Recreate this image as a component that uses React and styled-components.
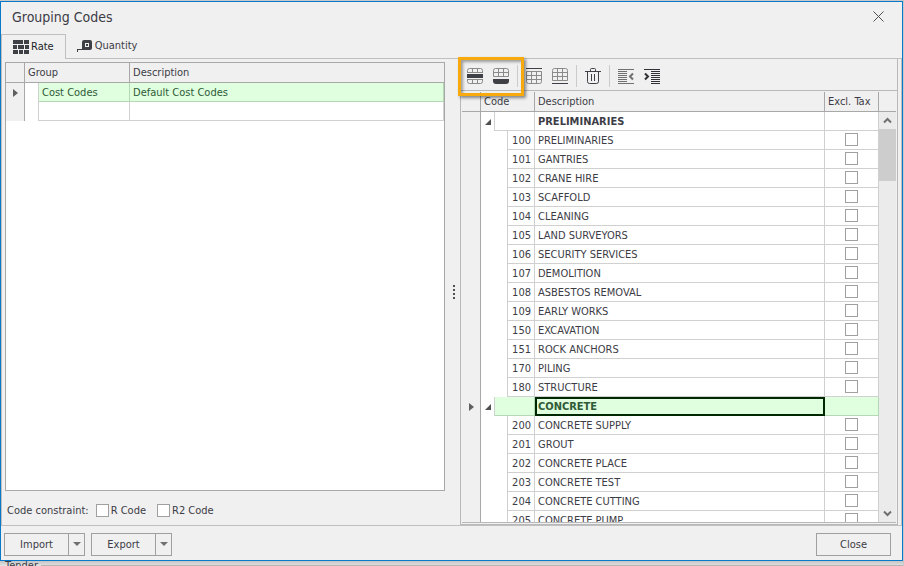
import React, { useState } from "react";
import styled, { createGlobalStyle, css } from "styled-components";

const Global = createGlobalStyle`
  *, *::before, *::after { box-sizing: border-box; }
  body { margin: 0; background: #c9c9c9; overflow: hidden; }
  body, button, input, table { font-family: "DejaVu Sans Condensed", "Noto Sans", sans-serif; font-size: 11px; color: #3c3c46; }
  button { margin: 0; padding: 0; border: 0; background: none; }
`;

const Desktop = styled.div`
  height: 100vh;
  display: flex;
  flex-direction: column;
  padding: 1px 1px 0 0;
`;
const Dialog = styled.section`
  flex: 1;
  min-height: 0;
  display: flex;
  flex-direction: column;
  border: 1px solid #0a78c8;
  background: #f0f0f0;
`;
const Behind = styled.footer`
  height: 5px;
  display: flex;
  align-items: flex-start;
  gap: 3px;
  overflow: hidden;
  padding-left: 5px;
  line-height: 10px;
  background: linear-gradient(#c4c4c4, #e4e4e4);
`;
const BehindRule = styled.span`
  flex: 1;
  height: 5px;
  border-bottom: 1px solid #b4b4b4;
`;
const TitleBar = styled.header`
  height: 32px;
  flex: none;
  display: flex;
  align-items: center;
  justify-content: space-between;
  padding: 0 18px 3px 11px;
`;
const Title = styled.h1`
  margin: 0;
  font-size: 14px;
  line-height: 18px;
  padding-top: 1px;
  font-weight: 400;
`;
const IconButton = styled.button`
  width: ${(p) => p.$w || 16}px;
  height: 16px;
  display: flex;
  align-items: center;
  justify-content: center;
  flex: none;
`;
const Tabs = styled.nav`
  display: flex;
  height: 25px;
  flex: none;
`;
const Tab = styled.button`
  display: flex;
  align-items: center;
  gap: 2px;
  padding: 0 11px 1px;
  border: 1px solid #c0c0c0;
  border-width: ${(p) => (p.$active ? "1px 1px 0 1px" : "0 0 1px 0")};
  ${(p) => p.$active && css`color: #1e1e28;`}
`;
const TabFill = styled.div`
  flex: 1;
  border-bottom: 1px solid #c0c0c0;
`;
const Body = styled.main`
  flex: 1;
  min-height: 0;
  display: grid;
  grid-template-columns: minmax(0, 443fr) 15px minmax(0, 438fr) 3px;
  border: 1px solid #c0c0c0;
  border-top: 0;
`;
const LeftPane = styled.div`
  display: flex;
  flex-direction: column;
  padding: 3px 0 0 3px;
  min-height: 0;
`;
const GroupGrid = styled.div`
  flex: 1;
  background: #fff;
  border: 1px solid #a8a8a8;
`;
const Splitter = styled.div`
  display: flex;
  align-items: center;
  justify-content: center;
  padding-left: 3px;
`;
const RightPane = styled.div`
  display: flex;
  flex-direction: column;
  min-height: 0;
  border: 1px solid #b8b8b8;
  border-top: 0;
  padding: 0 1px 1px;
`;
const Toolbar = styled.div`
  position: relative;
  height: 32px;
  flex: none;
  display: flex;
  align-items: center;
  gap: 10px;
  padding: 3px 0 0 6px;
  margin: 0 -1px;
  border-bottom: 1px solid #b8b8b8;
`;
const Separator = styled.span`
  width: 1px;
  height: 22px;
  background: #cbcbcb;
  margin: 0 -2px;
`;
const Highlight = styled.span`
  position: absolute;
  left: -3px;
  top: -2px;
  width: 66px;
  height: 39px;
  border: 3px solid #f8aa0c;
  box-shadow: 2px 2px 3px rgba(0, 0, 0, 0.45), inset 2px 2px 3px rgba(0, 0, 0, 0.35);
  pointer-events: none;
`;
const CodeArea = styled.div`
  flex: 1;
  min-height: 0;
  display: grid;
  grid-template-columns: minmax(0, 1fr) 17px;
  padding-top: 1px;
  border-bottom: 1px solid #b8b8b8;
`;
const Clip = styled.div`
  min-height: 0;
  overflow: hidden;
`;
const Table = styled.table`
  width: 100%;
  table-layout: fixed;
  border-collapse: separate;
  border-spacing: 0;
`;
const Col = styled.col`
  width: ${(p) => (p.$w ? p.$w + "px" : "auto")};
`;
const Th = styled.th`
  height: 20px;
  padding: 0 3px;
  text-align: left;
  font-weight: 400;
  line-height: 16px;
  white-space: nowrap;
  background: #f0f0f0;
  border: 0 solid #a8a8a8;
  border-width: 0 ${(p) => (p.$last ? 0 : "1px")} 1px 0;
`;
const Td = styled.td`
  height: 19px;
  padding: ${(p) => (p.$tick ? "0 3px" : "2px 3px 0")};
  line-height: 16px;
  white-space: nowrap;
  overflow: hidden;
  text-align: ${(p) => p.$align || "left"};
  background: ${(p) => (p.$on ? "#dfffdf" : "#fff")};
  border: 0 solid ${(p) => (p.$on ? "#b4d8b4" : "#d0d0d0")};
  border-width: 0 1px 1px 0;
  color: ${(p) => (p.$on ? "#2f5a36" : "#3c3c46")};
  font-weight: ${(p) => (p.$bold ? 700 : 400)};
  ${(p) => p.$focus && css`
    outline: 2px solid #002800;
    outline-offset: -2px;
  `}
`;
const Indicator = styled.td`
  padding: 0;
  height: 19px;
  background: #f0f0f0;
  border-right: 1px solid #a8a8a8;
  text-align: center;
  line-height: 0;
`;
const Indent = styled.td`
  padding: 0;
  background: #fff;
  border-right: 1px solid #d0d0d0;
  text-align: center;
  line-height: 0;
`;
const Check = styled.input`
  appearance: none;
  display: ${(p) => (p.$cell ? "block" : "inline-block")};
  width: 13px;
  height: 13px;
  margin: ${(p) => (p.$cell ? "0 auto 1px" : "0")};
  border: 1px solid #a0a0a0;
  background: #fff;
  &:checked { background: #606060; box-shadow: inset 0 0 0 2px #fff; }
`;
const ScrollColumn = styled.div`
  display: flex;
  flex-direction: column;
  min-height: 0;
`;
const ScrollHead = styled.div`
  height: 20px;
  flex: none;
  border-bottom: 1px solid #a8a8a8;
`;
const ScrollTrack = styled.div`
  flex: 1;
  display: flex;
  flex-direction: column;
  align-items: stretch;
  background: #ebebeb;
`;
const ScrollButton = styled.button`
  height: 17px;
  display: flex;
  align-items: center;
  justify-content: center;
`;
const ScrollThumb = styled.div`
  height: 52px;
  background: #cdcdcd;
  margin-bottom: auto;
`;
const Constraint = styled.div`
  height: 34px;
  flex: none;
  display: flex;
  align-items: center;
  gap: 7px;
  padding: 4px 0 0 2px;
`;
const CheckLabel = styled.label`
  display: flex;
  align-items: center;
  gap: 2px;
  margin-right: 4px;
`;
const Actions = styled.div`
  height: 34px;
  flex: none;
  display: flex;
  align-items: center;
  gap: 6px;
  padding: 2px 11px 0 3px;
`;
const Split = styled.div`
  display: flex;
  height: 23px;
  border: 1px solid #a0a0a0;
`;
const SplitMain = styled.button`
  width: 64px;
  border-right: 1px solid #a0a0a0;
`;
const SplitDrop = styled.button`
  width: 15px;
  display: flex;
  align-items: center;
  justify-content: center;
`;
const CloseButton = styled.button`
  margin-left: auto;
  width: 75px;
  height: 23px;
  border: 1px solid #a0a0a0;
`;

const Pointer = () => (
  <svg width="5" height="8" viewBox="0 0 5 8"><path d="M0 0v8l5-4z" fill="#606060" /></svg>
);
const Expander = () => (
  <svg width="6" height="6" viewBox="0 0 6 6"><path d="M6 0v6H0z" fill="#505050" /></svg>
);
const DownTriangle = () => (
  <svg width="8" height="4" viewBox="0 0 8 4"><path d="M0 0h8L4 4z" fill="#707070" /></svg>
);
const Chevron = ({ up }) => (
  <svg width="9" height="7" viewBox="0 0 9 7">
    <path d={up ? "M1 5.5 4.500 2 8 5.500" : "M1 1.500 4.500 5 8 1.500"} fill="none" stroke="#707070" strokeWidth="2" />
  </svg>
);
const Bricks = () => (
  <svg width="16" height="14" viewBox="0 0 16 14" fill="#3f3f46">
    <path d="M0 0h10v4H0zM11 0h5v4h-5zM0 5h4v4H0zM5 5h6v4H5zM12 5h4v4h-4zM0 10h5v4H0zM6 10h4v4H6zM11 10h5v4h-5z" />
  </svg>
);
const Tape = () => (
  <svg width="16" height="13" viewBox="0 0 16 13">
    <path fillRule="evenodd" fill="#3f3f46" d="M7 1h6q2 0 2 2v6q0 2-2 2H5V3q0-2 2-2zM8 4v4h4V4z" />
    <path fill="#3f3f46" d="M9 5h2v2H9zM0 10h5v1H1v2H0z" />
  </svg>
);
const InsertMiddle = () => (
  <svg width="16" height="16" viewBox="0 0 16 16" fill="none" stroke="#8a8a8a">
    <path d="M.5 5V2.500q0-2 2-2h11q2 0 2 2V5M.5 11v2.500q0 2 2 2h11q2 0 2-2V11M5.500 .5V5M10.500 .5V5M5.500 11v4.500M10.500 11v4.500M.5 4.500h15M.5 11.500h15" />
    <path d="M0 6h16v4H0z" fill="#3f3f46" stroke="none" />
  </svg>
);
const InsertBottom = () => (
  <svg width="16" height="16" viewBox="0 0 16 16" fill="none" stroke="#8a8a8a">
    <path d="M.5 8.500v-6q0-2 2-2h11q2 0 2 2v6zM5.500 .5v8M10.500 .5v8M.5 4.500h15" />
    <path d="M0 11h16v2q0 3-3 3H3q-3 0-3-3z" fill="#3f3f46" stroke="none" />
  </svg>
);
const GridTop = () => (
  <svg width="16" height="16" viewBox="0 0 16 16" fill="none" stroke="#8a8a8a">
    <path d="M.5 3.500h15v10q0 2-2 2h-11q-2 0-2-2zM5.500 3.500v12M10.500 3.500v12M.5 7.500h15M.5 11.500h15" />
    <path d="M0 .5h16" stroke="#3f3f46" />
  </svg>
);
const GridBottom = () => (
  <svg width="16" height="16" viewBox="0 0 16 16" fill="none" stroke="#8a8a8a">
    <path d="M.5 12.500v-10q0-2 2-2h11q2 0 2 2v10zM5.500 .5v12M10.500 .5v12M.5 4.500h15M.5 8.500h15" />
    <path d="M0 15.500h16" stroke="#3f3f46" />
  </svg>
);
const Trash = () => (
  <svg width="16" height="16" viewBox="0 0 16 16" fill="none" stroke="#3f3f46">
    <path d="M0 3.500h16M5.500 3V1.500q0-1 1-1h3q1 0 1 1V3M2.500 3.500v10q0 2 2 2h7q2 0 2-2v-10M6.500 6v7M9.500 6v7" />
  </svg>
);
const Outdent = () => (
  <svg width="16" height="16" viewBox="0 0 16 16" fill="none" stroke="#707070">
    <path d="M0 1.500h16M0 3.500h9M0 5.500h9M0 7.500h9M0 9.500h9M0 11.500h9M0 13.500h9M0 15.500h16" />
    <path d="M15 5.500l-3 3 3 3" strokeWidth="2" />
  </svg>
);
const Indentation = () => (
  <svg width="16" height="16" viewBox="0 0 16 16" fill="none" stroke="#303036">
    <path d="M0 1.500h16M7 3.500h9M7 5.500h9M7 7.500h9M7 9.500h9M7 11.500h9M7 13.500h9M7 15.500h9" />
    <path d="M1 5.500l3 3-3 3" strokeWidth="2" />
  </svg>
);
const Cross = () => (
  <svg width="11" height="11" viewBox="0 0 11 11"><path d="M.5.5l10 10M10.500.5l-10 10" stroke="#505050" /></svg>
);
const Grip = () => (
  <svg width="2" height="14" viewBox="0 0 2 14"><path d="M0 0h2v2H0zM0 4h2v2H0zM0 8h2v2H0zM0 12h2v2H0z" fill="#505050" /></svg>
);

const codes = [
  { group: "PRELIMINARIES" },
  ["100", "PRELIMINARIES"], ["101", "GANTRIES"], ["102", "CRANE HIRE"], ["103", "SCAFFOLD"],
  ["104", "CLEANING"], ["105", "LAND SURVEYORS"], ["106", "SECURITY SERVICES"], ["107", "DEMOLITION"],
  ["108", "ASBESTOS REMOVAL"], ["109", "EARLY WORKS"], ["150", "EXCAVATION"], ["151", "ROCK ANCHORS"],
  ["170", "PILING"], ["180", "STRUCTURE"],
  { group: "CONCRETE", selected: true },
  ["200", "CONCRETE SUPPLY"], ["201", "GROUT"], ["202", "CONCRETE PLACE"], ["203", "CONCRETE TEST"],
  ["204", "CONCRETE CUTTING"], ["205", "CONCRETE PUMP"],
];

function CodeRow({ row }) {
  if (row.group) {
    return (
      <tr>
        <Indicator>{row.selected && <Pointer />}</Indicator>
        <Indent><Expander /></Indent>
        <Td colSpan={2} $on={row.selected} />
        <Td $bold $on={row.selected} $focus={row.selected}>{row.group}</Td>
        <Td $on={row.selected} />
      </tr>
    );
  }
  return (
    <tr>
      <Indicator />
      <Indent colSpan={2} />
      <Td $align="right">{row[0]}</Td>
      <Td>{row[1]}</Td>
      <Td $tick><Check $cell type="checkbox" aria-label={`Exclude tax for ${row[1]}`} /></Td>
    </tr>
  );
}

function SplitButton({ label }) {
  return (
    <Split>
      <SplitMain>{label}</SplitMain>
      <SplitDrop aria-label={`${label} options`}><DownTriangle /></SplitDrop>
    </Split>
  );
}

export default function App() {
  const [tab, setTab] = useState("Rate");
  return (
    <Desktop>
      <Global />
      <Dialog>
        <TitleBar>
          <Title>Grouping Codes</Title>
          <IconButton $w={11} aria-label="Close dialog"><Cross /></IconButton>
        </TitleBar>
        <Tabs>
          <Tab $active={tab === "Rate"} onClick={() => setTab("Rate")}><Bricks />Rate</Tab>
          <Tab $active={tab === "Quantity"} onClick={() => setTab("Quantity")}><Tape />Quantity</Tab>
          <TabFill />
        </Tabs>
        <Body>
          <LeftPane>
            <GroupGrid>
              <Table>
                <colgroup><Col $w={19} /><Col $w={14} /><Col $w={91} /><Col /></colgroup>
                <thead>
                  <tr><Th aria-label="Row" /><Th colSpan={2}>Group</Th><Th $last>Description</Th></tr>
                </thead>
                <tbody>
                  <tr>
                    <Indicator><Pointer /></Indicator><Indent />
                    <Td $on>Cost Codes</Td><Td $on>Default Cost Codes</Td>
                  </tr>
                  <tr><Indicator /><Indent /><Td /><Td /></tr>
                </tbody>
              </Table>
            </GroupGrid>
            <Constraint>
              <span>Code constraint:</span>
              <CheckLabel><Check type="checkbox" />R Code</CheckLabel>
              <CheckLabel><Check type="checkbox" />R2 Code</CheckLabel>
            </Constraint>
          </LeftPane>
          <Splitter><Grip /></Splitter>
          <RightPane>
            <Toolbar>
              <IconButton aria-label="Insert row"><InsertMiddle /></IconButton>
              <IconButton aria-label="Append row"><InsertBottom /></IconButton>
              <Separator />
              <IconButton aria-label="Insert group"><GridTop /></IconButton>
              <IconButton aria-label="Append group"><GridBottom /></IconButton>
              <Separator />
              <IconButton aria-label="Delete"><Trash /></IconButton>
              <Separator />
              <IconButton aria-label="Outdent"><Outdent /></IconButton>
              <IconButton aria-label="Indent"><Indentation /></IconButton>
              <Highlight />
            </Toolbar>
            <CodeArea>
              <Clip>
                <Table>
                  <colgroup><Col $w={19} /><Col $w={14} /><Col $w={13} /><Col $w={27} /><Col /><Col $w={54} /></colgroup>
                  <thead>
                    <tr>
                      <Th aria-label="Row" /><Th colSpan={3}>Code</Th><Th>Description</Th><Th>Excl. Tax</Th>
                    </tr>
                  </thead>
                  <tbody>
                    {codes.map((row) => <CodeRow key={row.group ? "g-" + row.group : row[0]} row={row} />)}
                  </tbody>
                </Table>
              </Clip>
              <ScrollColumn>
                <ScrollHead />
                <ScrollTrack>
                  <ScrollButton aria-label="Scroll up"><Chevron up /></ScrollButton>
                  <ScrollThumb />
                  <ScrollButton aria-label="Scroll down"><Chevron /></ScrollButton>
                </ScrollTrack>
              </ScrollColumn>
            </CodeArea>
          </RightPane>
        </Body>
        <Actions>
          <SplitButton label="Import" />
          <SplitButton label="Export" />
          <CloseButton>Close</CloseButton>
        </Actions>
      </Dialog>
      <Behind>Tender<BehindRule /></Behind>
    </Desktop>
  );
}
